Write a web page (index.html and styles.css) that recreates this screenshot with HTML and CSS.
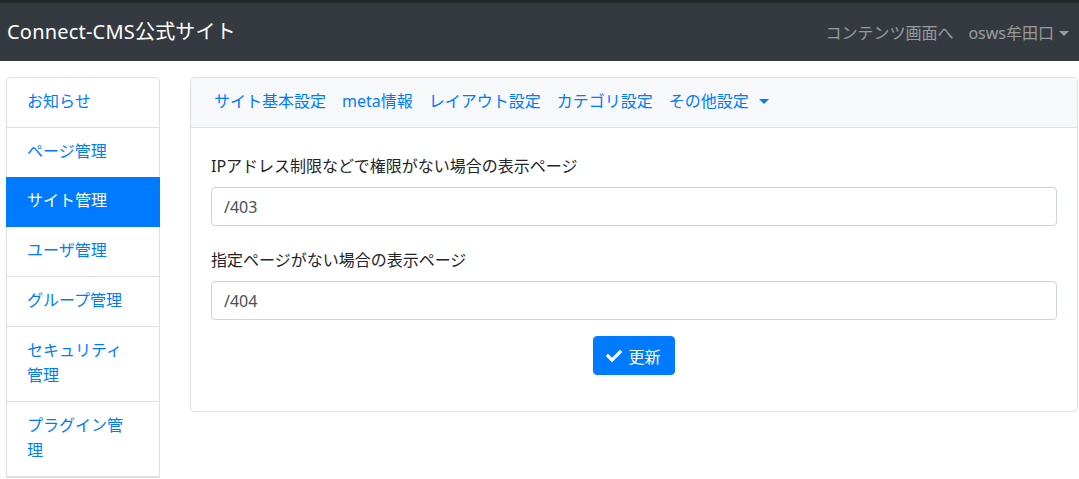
FILE: index.html
```html
<!DOCTYPE html>
<html lang="ja">

<head>
    <meta charset="UTF-8">
    <meta name="viewport" content="width=device-width, initial-scale=1.0">
    <title>サイト管理 | Connect-CMS公式サイト</title>
    <link rel="stylesheet" href="styles.css">
</head>

<body>
    <nav class="navbar">
        <a class="brand" href="#">Connect-CMS公式サイト</a>
        <div class="nav-right">
            <a href="#">コンテンツ画面へ</a>
            <a href="#" class="dropdown-toggle">osws牟田口</a>
        </div>
    </nav>

    <div class="main">
        <div class="list-group">
            <a href="#" class="list-item">お知らせ</a>
            <a href="#" class="list-item">ページ管理</a>
            <a href="#" class="list-item active">サイト管理</a>
            <a href="#" class="list-item">ユーザ管理</a>
            <a href="#" class="list-item">グループ管理</a>
            <a href="#" class="list-item">セキュリティ管理</a>
            <a href="#" class="list-item">プラグイン管理</a>
        </div>

        <div class="card">
            <div class="card-header">
                <a href="#">サイト基本設定</a>
                <a href="#">meta情報</a>
                <a href="#">レイアウト設定</a>
                <a href="#">カテゴリ設定</a>
                <a href="#" class="dropdown-toggle wide">その他設定</a>
            </div>
            <form class="card-body">
                <div class="form-group">
                    <label for="page403">IPアドレス制限などで権限がない場合の表示ページ</label>
                    <input type="text" id="page403" value="/403">
                </div>
                <div class="form-group">
                    <label for="page404">指定ページがない場合の表示ページ</label>
                    <input type="text" id="page404" value="/404">
                </div>
                <div class="actions">
                    <button type="button" class="btn">
                        <svg viewBox="0 0 512 512" width="16" height="16"><path fill="currentColor" d="M173.9 439.4l-166.4-166.4c-10-10-10-26.2 0-36.2l36.2-36.2c10-10 26.2-10 36.2 0L192 312.7 432.1 72.6c10-10 26.2-10 36.2 0l36.2 36.2c10 10 10 26.2 0 36.2l-294.4 294.4c-10 10-26.2 10-36.2 0z"/></svg>
                        更新
                    </button>
                </div>
            </form>
        </div>
    </div>
</body>

</html>
```

FILE: styles.css
```css
* {
    box-sizing: border-box;
}

body {
    margin: 0;
    font-family: "Noto Sans", "Noto Sans CJK JP", sans-serif;
    font-size: 16px;
    color: #212529;
    background: #fff;
    border-top: 3px solid #25282b;
}

a {
    color: #007bff;
    text-decoration: none;
}

.navbar {
    height: 58px;
    background: #343a40;
    display: flex;
    align-items: center;
    justify-content: space-between;
    padding: 0 10px 0 7px;
}

.brand {
    color: #fff;
    font-size: 20px;
    line-height: 30px;
    letter-spacing: 0.2px;
}

.nav-right {
    display: flex;
    gap: 15px;
    padding-top: 2px;
}

.nav-right a {
    color: rgba(255, 255, 255, 0.5);
    line-height: 24px;
}

.dropdown-toggle::after {
    content: "";
    display: inline-block;
    margin-left: 5px;
    vertical-align: 3px;
    border-top: 5px solid;
    border-left: 5px solid transparent;
    border-right: 5px solid transparent;
}

.dropdown-toggle.wide::after {
    margin-left: 10px;
}

.main {
    display: flex;
    align-items: flex-start;
    gap: 30px;
    padding: 16px 1px 0 6px;
}

.list-group {
    width: 154px;
    flex-shrink: 0;
    display: flex;
    flex-direction: column;
    border: 1px solid #dfdfdf;
    border-radius: 4px 4px 0 0;
}

.list-item {
    padding: 11px 22px 13px 20px;
    line-height: 25px;
    border-bottom: 1px solid #dfdfdf;
}

.list-item.active {
    background: #007bff;
    color: #fff;
    margin: -1px -1px 0;
    padding-left: 21px;
    border-bottom-color: #007bff;
}

.card {
    flex: 1;
    border: 1px solid #dfdfdf;
    border-radius: 4px;
}

.card-header {
    background: #f7f8f9;
    border-bottom: 1px solid #dfdfdf;
    padding: 10px 15px 14px;
    display: flex;
    height: 50px;
    align-items: center;
}

.card-header a {
    padding: 0 8px;
    line-height: 24px;
}

.card-body {
    margin: 0;
    padding: 26px 20px 20px;
}

.form-group {
    margin-bottom: 22px;
}

.form-group label {
    display: block;
    line-height: 24px;
    margin-bottom: 9px;
}

.form-group input {
    display: block;
    width: 100%;
    height: 39px;
    padding: 6px 12px;
    font: inherit;
    color: #495057;
    border: 1px solid #ced4da;
    border-radius: 4px;
}

.actions {
    display: flex;
    justify-content: center;
    margin-top: -6px;
    padding-bottom: 16px;
}

.btn {
    display: flex;
    align-items: center;
    gap: 6px;
    height: 39px;
    padding: 0 13px 0 12px;
    font: inherit;
    color: #fff;
    background: #007bff;
    border: 1px solid #007bff;
    border-radius: 4px;
}
```
